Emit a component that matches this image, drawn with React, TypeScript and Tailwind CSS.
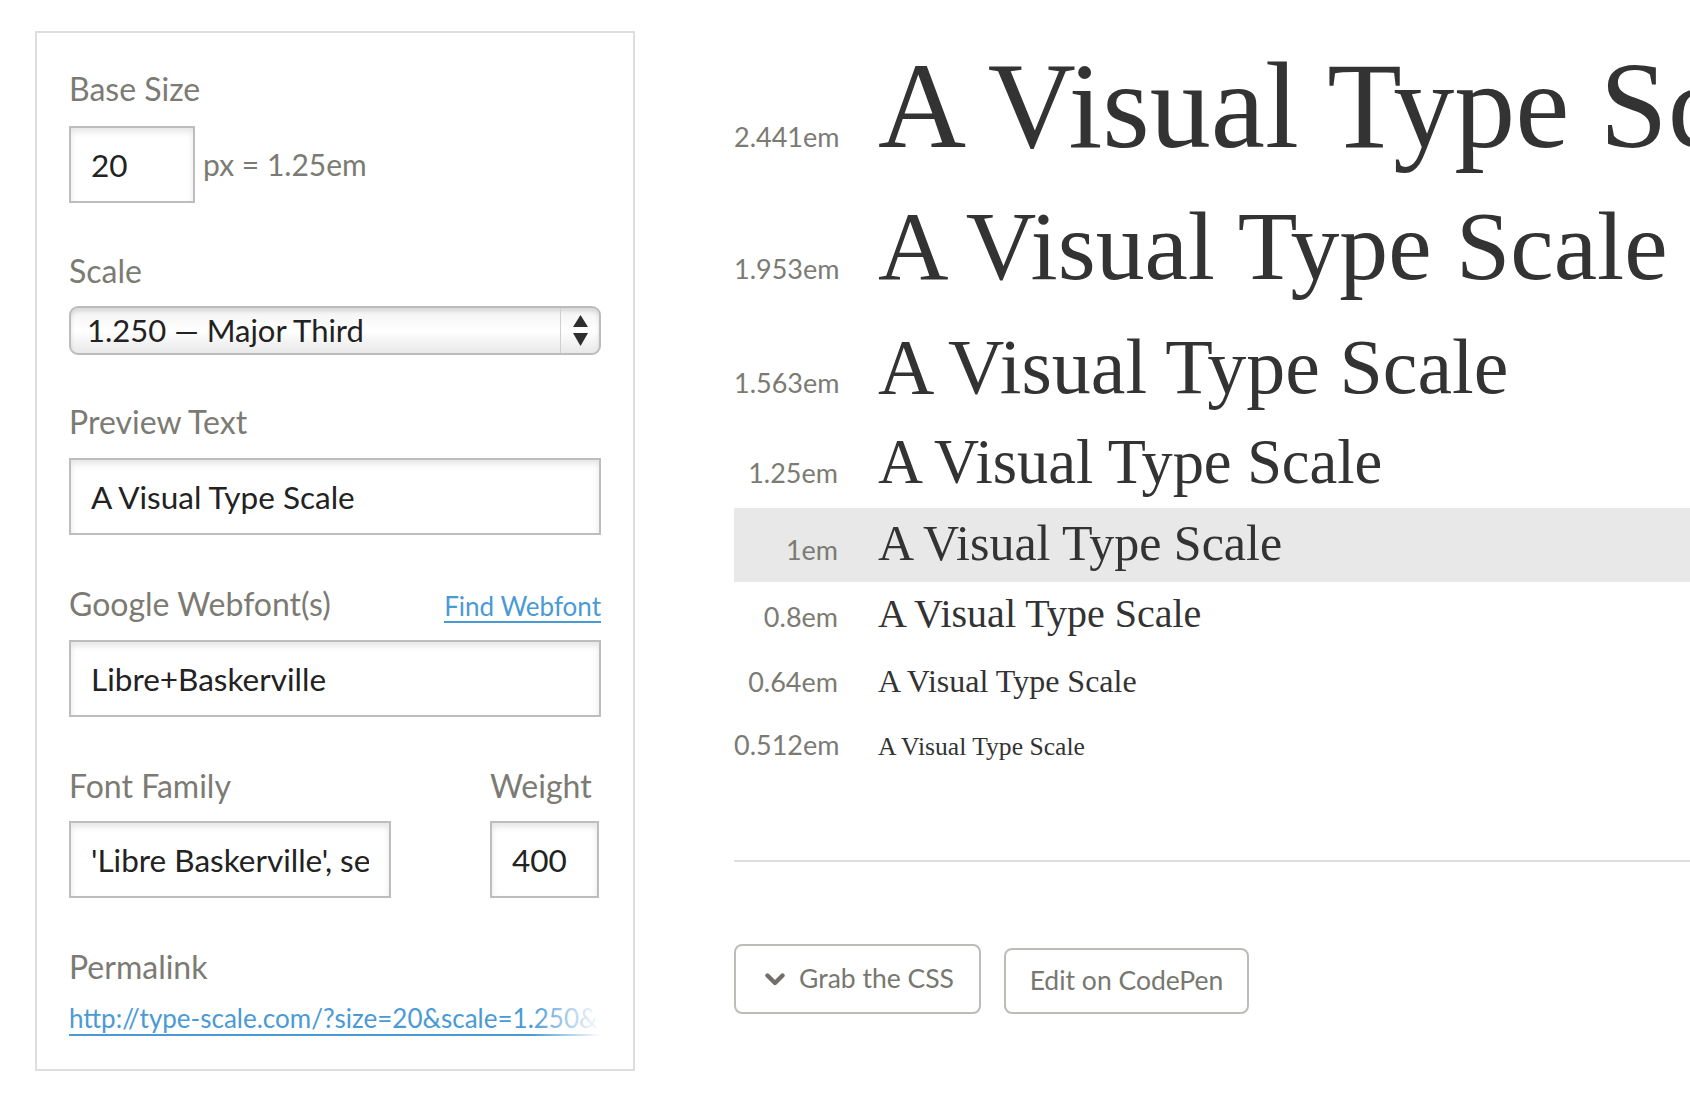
import React from "react";

const rows = [
  { label: "2.441em", size: "text-[122px]", h: "h-[138px] leading-[138px]" },
  { label: "1.953em", size: "text-[97.7px]", h: "h-[143px] leading-[143px]" },
  { label: "1.563em", size: "text-[78px]", h: "h-[97px] leading-[97px]" },
  { label: "1.25em", size: "text-[62.4px]", h: "h-[93px] leading-[93px]" },
  { label: "1em", size: "text-[50px]", h: "h-[74px] leading-[70px]", base: true },
  { label: "0.8em", size: "text-[40px]", h: "h-[65px] leading-[64px]" },
  { label: "0.64em", size: "text-[32px]", h: "h-[67px] leading-[69px]" },
  { label: "0.512em", size: "text-[25.6px]", h: "h-[65px] leading-[65px]" },
];

const inputCls =
  "block h-[77px] border-2 border-[#bdbdbd] bg-white px-5 text-[31.5px] text-[#222] shadow-[inset_0_4px_6px_rgba(0,0,0,0.10)] outline-none font-['Lato',sans-serif]";

function Label({ children }: { children: React.ReactNode }) {
  return <div className="text-[32px] leading-9 text-[#7b7b73]">{children}</div>;
}

function SelectArrows() {
  return (
    <svg width="15" height="31" viewBox="0 0 15 31">
      <path d="M7.5 0 L15 12 L0 12 Z" fill="#2e2e2e" />
      <path d="M7.5 31 L15 18 L0 18 Z" fill="#2e2e2e" />
    </svg>
  );
}

function Chevron() {
  return (
    <svg width="20" height="13" viewBox="0 0 20 13">
      <path d="M2.5 2.5 L10 10 L17.5 2.5" fill="none" stroke="#707069" strokeWidth="4.4" strokeLinecap="round" strokeLinejoin="round" />
    </svg>
  );
}

export default function App() {
  return (
    <div className="flex min-h-screen w-full items-start overflow-hidden bg-white pl-[35px] pt-[31px] font-['Lato',sans-serif]">
      {/* settings panel */}
      <aside className="w-[600px] shrink-0 border-2 border-[#dedede] px-8 pb-[33px] pt-[38px]">
        <Label>Base Size</Label>
        <div className="mt-[19px] flex items-center">
          <input readOnly defaultValue="20" className={inputCls + " h-[75px] w-[126px]"} />
          <span className="ml-2 text-[30px] text-[#7b7b73]">px = 1.25em</span>
        </div>

        <div className="mt-[50px]">
          <Label>Scale</Label>
        </div>
        <div className="mt-[17px] flex h-[49px] w-full items-stretch rounded-[9px] border-2 border-[#bcbcbc] bg-linear-to-b from-[#f2f2f2] via-white to-[#e9e9e9] shadow-[inset_0_3px_4px_rgba(0,0,0,0.12)]">
          <div className="flex flex-1 items-center pl-4 text-[31px] text-[#222]">1.250 — Major Third</div>
          <div className="flex w-[39px] items-center justify-center border-l border-[#cfcfcf]">
            <SelectArrows />
          </div>
        </div>

        <div className="mt-[49px]">
          <Label>Preview Text</Label>
        </div>
        <input readOnly defaultValue="A Visual Type Scale" className={inputCls + " mt-[18px] w-full"} />

        <div className="mt-[51px] flex items-baseline justify-between">
          <Label>Google Webfont(s)</Label>
          <a href="#" className="border-b-2 border-[#4a9ad6] text-[26px] leading-[30px] text-[#4a9ad6]">
            Find Webfont
          </a>
        </div>
        <input readOnly defaultValue="Libre+Baskerville" className={inputCls + " mt-[17px] w-full"} />

        <div className="mt-[51px] flex items-end">
          <div className="w-[421px]">
            <Label>Font Family</Label>
            <input
              readOnly
              defaultValue="'Libre Baskerville', serif"
              className={inputCls + " mt-[17px] h-[75px] w-[322px]"}
            />
          </div>
          <div className="flex-1">
            <Label>Weight</Label>
            <input readOnly defaultValue="400" className={inputCls + " mt-[17px] h-[75px] w-[109px]"} />
          </div>
        </div>

        <div className="mt-[51px]">
          <Label>Permalink</Label>
        </div>
        <div className="relative mt-[17px] overflow-hidden whitespace-nowrap">
          <a href="#" className="inline-block border-b-2 border-[#4a9ad6] text-[26px] leading-[32px] text-[#4a9ad6]">
            http://type-scale.com/?size=20&amp;scale=1.250&amp;text=A%20Visual%20Type%20Scale&amp;font=Libre%2BBaskerville
          </a>
          <div className="absolute inset-y-0 right-0 w-[70px] bg-linear-to-r from-white/0 to-white" />
        </div>
      </aside>

      {/* preview column */}
      <main className="ml-[99px] mt-[6px] min-w-0 flex-1">
        {rows.map((r) => (
          <div key={r.label} className={"flex items-baseline whitespace-nowrap " + r.h + (r.base ? " bg-[#e8e8e8]" : "")}>
            <span className="w-[104px] shrink-0 text-right text-[27px] leading-none text-[#7b7b73]">
              {r.label}
            </span>
            <span className={"ml-10 font-['Liberation_Serif',serif] text-[#333] " + r.size}>A Visual Type Scale</span>
          </div>
        ))}

        <div className="mt-[81px] h-[2px] w-full bg-[#dddddd]" />

        <div className="mt-[82px] flex items-end gap-[23px]">
          <button className="flex h-[70px] w-[247px] items-center justify-center gap-[14px] rounded-[8px] border-2 border-[#bdbdb8] pl-1 text-[26.5px] text-[#777770]">
            <Chevron />
            <span>Grab the CSS</span>
          </button>
          <button className="flex h-[66px] w-[245px] items-center justify-center rounded-[8px] border-2 border-[#bdbdb8] text-[26.5px] text-[#777770]">
            Edit on CodePen
          </button>
        </div>
      </main>
    </div>
  );
}
